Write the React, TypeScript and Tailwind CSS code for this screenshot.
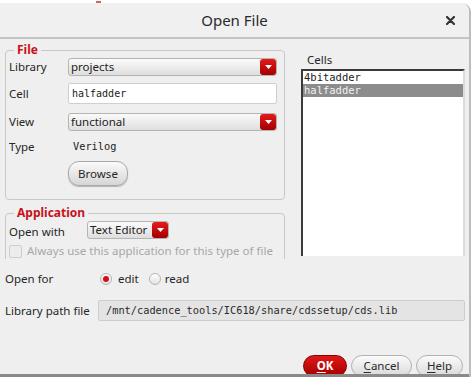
const sans = "font-['Noto_Sans','DejaVu_Sans',sans-serif]";
const mono = "font-['DejaVu_Sans_Mono','Liberation_Mono',monospace]";

function Arrow() {
  return (
    <div className="w-[16px] self-stretch rounded-[3px] bg-linear-to-b from-[#e41b1b] to-[#a30000] flex items-center justify-center">
      <svg width="7" height="4" viewBox="0 0 7 4">
        <path d="M0 0 H7 L3.5 4 Z" fill="#fff" />
      </svg>
    </div>
  );
}

function Combo({ value, className }: { value: string; className: string }) {
  return (
    <div className={`flex rounded-[3px] border border-[#b4b4b4] bg-linear-to-b from-[#fbfbfb] to-[#dedede] ${className}`}>
      <span className="flex-1 pl-[2px] leading-none self-center text-[11.5px] text-[#222]">{value}</span>
      <Arrow />
    </div>
  );
}

function Btn({ children, className }: { children: React.ReactNode; className: string }) {
  return (
    <div className={`h-[22px] rounded-[11px] flex items-center justify-center text-[11.5px] ${className}`}>
      {children}
    </div>
  );
}

export default function App() {
  return (
    <div className={`w-[474px] h-[377px] bg-white overflow-hidden ${sans} text-[11.5px] text-[#262626]`}>
      <div className="h-[3px] flex items-end pl-[96px]">
        <div className="w-[5px] h-[2px] bg-[#c46a6a]" />
      </div>

      <div className="w-[471px] h-[374px] bg-[#efefef] border-r-[2px] border-[#bdbdbd] rounded-tr-[9px] flex flex-col overflow-hidden">
        {/* title bar */}
        <div className="h-[36px] shrink-0 border-b-[2px] border-[#c4c4c4] bg-[#f0f0f0] grid grid-cols-[1fr_auto_1fr] items-center">
          <div />
          <span className="text-[15px] text-[#2a2a2a] pt-[1px]">Open File</span>
          <div className="flex justify-end pr-[14px]">
            <svg width="9" height="9" viewBox="0 0 9 9">
              <path d="M1 1 L8 8 M8 1 L1 8" stroke="#333" strokeWidth="2.2" strokeLinecap="round" />
            </svg>
          </div>
        </div>

        {/* upper section */}
        <div className="h-[220px] shrink-0 overflow-hidden flex pl-[5px] pt-[3px]">
          <div className="w-[280px] shrink-0 flex flex-col">
            <fieldset className="border border-[#c8c8c8] rounded-[4px] pl-[3px] pr-[7px] pb-[13px] m-0">
              <legend className="ml-[5px] px-[3px] text-[12px] leading-[16px] font-bold text-[#c8111a]">File</legend>
              <div className="flex items-center h-[18px]">
                <span className="w-[59px]">Library</span>
                <Combo value="projects" className="flex-1 h-[18px]" />
              </div>
              <div className="flex items-center mt-[7px]">
                <span className="w-[59px]">Cell</span>
                <div className={`flex-1 h-[21px] bg-white border border-[#cfcfcf] rounded-[2px] flex items-center pl-[3px] ${mono} text-[10px] text-[#222]`}>
                  halfadder
                </div>
              </div>
              <div className="flex items-center mt-[9px] h-[18px]">
                <span className="w-[59px]">View</span>
                <Combo value="functional" className="flex-1 h-[18px]" />
              </div>
              <div className="flex items-center mt-[8px] h-[16px]">
                <span className="w-[64px]">Type</span>
                <span className={`${mono} text-[10.3px] text-[#222]`}>Verilog</span>
              </div>
              <div className="flex mt-[6px] pl-[59px]">
                <Btn className="w-[60px] h-[25px] rounded-[10px] border border-[#a9a9a9] bg-linear-to-b from-[#fafafa] to-[#d6d6d6] shadow-[0_1px_1px_rgba(0,0,0,0.25)]">
                  Browse
                </Btn>
              </div>
            </fieldset>

            <fieldset className="mt-[5px] border border-[#c8c8c8] rounded-[4px] pl-[3px] pr-[7px] pb-[10px] m-0">
              <legend className="ml-[5px] px-[3px] text-[12px] leading-[16px] font-bold text-[#c8111a]">Application</legend>
              <div className="flex items-center h-[18px]">
                <span className="w-[78px] pt-[3px]">Open with</span>
                <Combo value="Text Editor" className="w-[82px] h-[18px]" />
              </div>
              <div className="flex items-center mt-[5px] h-[14px] text-[#a8a8a8] whitespace-nowrap overflow-hidden">
                <div className="w-[13px] h-[13px] mr-[5px] rounded-[2px] border border-[#cdcdcd] bg-[#ececec]" />
                Always use this application for this type of file
              </div>
            </fieldset>
          </div>

          <div className="ml-[16px] flex flex-col w-[164px]">
            <span className="pl-[6px] mt-[10px] leading-[16px]">Cells</span>
            <div className={`mt-[1px] h-[187px] bg-white border-l-[2px] border-t-[2px] border-[#3a3a3a] border-r-[2px] border-r-[#dcdcdc] ${mono} text-[10.5px]`}>
              <div className="h-[13px] leading-[13px] pl-[1px] text-[#222]">4bitadder</div>
              <div className="h-[13px] leading-[13px] pl-[1px] bg-[#8c8c8c] text-[#f2f2f2]">halfadder</div>
            </div>
          </div>
        </div>

        {/* lower section */}
        <div className="flex items-center mt-[10px] pl-[5px] h-[20px]">
          <span className="w-[95px]">Open for</span>
          <div className="w-[12px] h-[12px] rounded-full border border-[#b5b5b5] bg-linear-to-b from-white to-[#e2e2e2] flex items-center justify-center">
            <div className="w-[6px] h-[6px] rounded-full bg-[#d0101a]" />
          </div>
          <span className="ml-[6px]">edit</span>
          <div className="ml-[10px] w-[12px] h-[12px] rounded-full border border-[#b5b5b5] bg-linear-to-b from-white to-[#e2e2e2]" />
          <span className="ml-[4px]">read</span>
        </div>

        <div className="flex items-center mt-[11px] pl-[5px] pr-[4px]">
          <span className="w-[93px]">Library path file</span>
          <div className={`flex-1 h-[21px] bg-[#e4e4e4] border border-[#cccccc] rounded-[2px] flex items-center pl-[7px] ${mono} text-[10.3px] text-[#2a2a2a]`}>
            /mnt/cadence_tools/IC618/share/cdssetup/cds.lib
          </div>
        </div>

        <div className="mt-[34px] h-[19px] overflow-hidden flex justify-end gap-[4px] pr-[6px]">
          <Btn className="w-[44px] bg-linear-to-b from-[#e01818] to-[#a60000] border border-[#8e0000] text-white font-bold">
            <span className="underline underline-offset-2">O</span>K
          </Btn>
          <Btn className="w-[61px] border border-[#b2b2b2] bg-linear-to-b from-[#fbfbfb] to-[#dadada] text-[#2a2a2a]">
            <span className="underline underline-offset-2">C</span>ancel
          </Btn>
          <Btn className="w-[47px] border border-[#b2b2b2] bg-linear-to-b from-[#fbfbfb] to-[#dadada] text-[#2a2a2a]">
            <span className="underline underline-offset-2">H</span>elp
          </Btn>
        </div>
        <div className="h-[3px] bg-[#8a8a8a]" />
      </div>
    </div>
  );
}
